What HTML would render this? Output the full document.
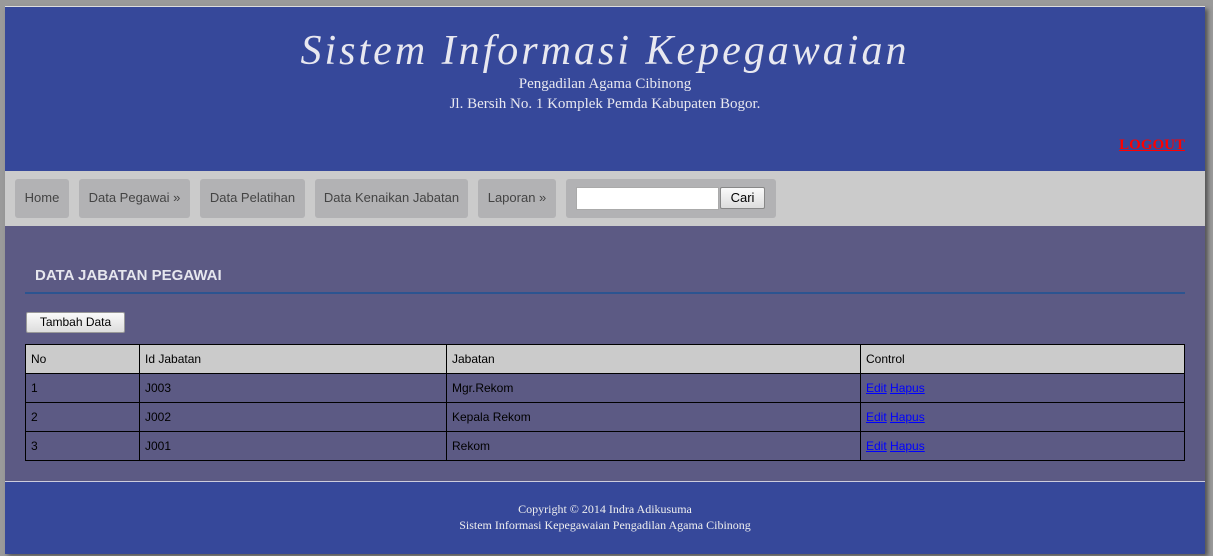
<!DOCTYPE html>
<html><head><meta charset="utf-8"><style>
*{margin:0;padding:0;box-sizing:border-box}
body{width:1213px;height:556px;background:#9a9a9a;position:relative;overflow:hidden;font-family:"Liberation Sans",sans-serif}
#wrap{position:absolute;left:5px;top:6px;width:1200px;height:547px;border-top:1px solid #ddd;box-shadow:3px 3px 4px #555}
#hdr{position:absolute;left:0;top:0;width:1200px;height:164px;background:#36489a;color:#e8e8f0;text-align:center}
#hdr h1{font-family:"Liberation Serif",serif;font-style:italic;font-weight:normal;font-size:42px;letter-spacing:3px;position:absolute;top:20px;width:100%}
#hdr .s{font-family:"Liberation Serif",serif;font-size:15px;position:absolute;width:100%}
#logout{position:absolute;right:20px;top:130px;color:#ff0000;font-family:"Liberation Serif",serif;font-weight:bold;font-size:15px;text-decoration:underline}
#nav{position:absolute;left:0;top:164px;width:1200px;height:55px;background:#cbcbcb}
.b{position:absolute;top:8px;height:39px;background:#b2b2b4;border-radius:3px;color:#444;font-size:13px;line-height:37px;text-align:center}
#main{position:absolute;left:0;top:219px;width:1200px;height:255px;background:#5c5a84}
#main h2{position:absolute;left:30px;top:41px;color:#e6e6ee;font-size:15px;font-weight:bold}
#line{position:absolute;left:20px;top:66px;width:1160px;height:2px;background:#2c5490}
#add{position:absolute;left:21px;top:86px;width:99px;height:21px;background:linear-gradient(#fafafa,#ddd);border:1px solid #999;border-radius:2px;font-size:12px;text-align:center;line-height:19px;color:#000}
table{position:absolute;left:20px;top:118px;width:1160px;border-collapse:collapse;font-size:12px}
td{border:1px solid #000;height:29px;padding-left:5px;color:#000}
tr.h td{background:#cbcbcb}
a{color:#00f}
#ft{position:absolute;left:0;top:474px;width:1200px;height:73px;background:#36489a;border-top:1px solid #ccd;color:#eee;text-align:center;font-family:"Liberation Serif",serif;font-size:12px}
</style></head><body>
<div id="wrap">
<div id="hdr">
<h1>Sistem Informasi Kepegawaian</h1>
<div class="s" style="top:69px">Pengadilan Agama Cibinong</div>
<div class="s" style="top:89px">Jl. Bersih No. 1 Komplek Pemda Kabupaten Bogor.</div>
<div id="logout">LOGOUT</div>
</div>
<div id="nav">
<div class="b" style="left:10px;width:54px">Home</div>
<div class="b" style="left:74px;width:111px">Data Pegawai »</div>
<div class="b" style="left:195px;width:105px">Data Pelatihan</div>
<div class="b" style="left:310px;width:153px">Data Kenaikan Jabatan</div>
<div class="b" style="left:473px;width:78px">Laporan »</div>
<div class="b" style="left:561px;width:210px">
<div style="position:absolute;left:10px;top:8px;width:143px;height:23px;background:#fff;border:1px solid #aaa"></div>
<div style="position:absolute;left:154px;top:8px;width:45px;height:22px;background:linear-gradient(#fafafa,#ddd);border:1px solid #888;border-radius:2px;line-height:20px;color:#000;font-size:13px">Cari</div>
</div>
</div>
<div id="main">
<h2>DATA JABATAN PEGAWAI</h2>
<div id="line"></div>
<div id="add">Tambah Data</div>
<table>
<tr class="h"><td style="width:114px">No</td><td style="width:307px">Id Jabatan</td><td style="width:414px">Jabatan</td><td>Control</td></tr>
<tr><td>1</td><td>J003</td><td>Mgr.Rekom</td><td><a href="#">Edit</a> <a href="#">Hapus</a></td></tr>
<tr><td>2</td><td>J002</td><td>Kepala Rekom</td><td><a href="#">Edit</a> <a href="#">Hapus</a></td></tr>
<tr><td>3</td><td>J001</td><td>Rekom</td><td><a href="#">Edit</a> <a href="#">Hapus</a></td></tr>
</table>
</div>
<div id="ft">
<div style="position:absolute;top:20px;width:100%">Copyright © 2014 Indra Adikusuma</div>
<div style="position:absolute;top:36px;width:100%">Sistem Informasi Kepegawaian Pengadilan Agama Cibinong</div>
</div>
</div>
</body></html>
